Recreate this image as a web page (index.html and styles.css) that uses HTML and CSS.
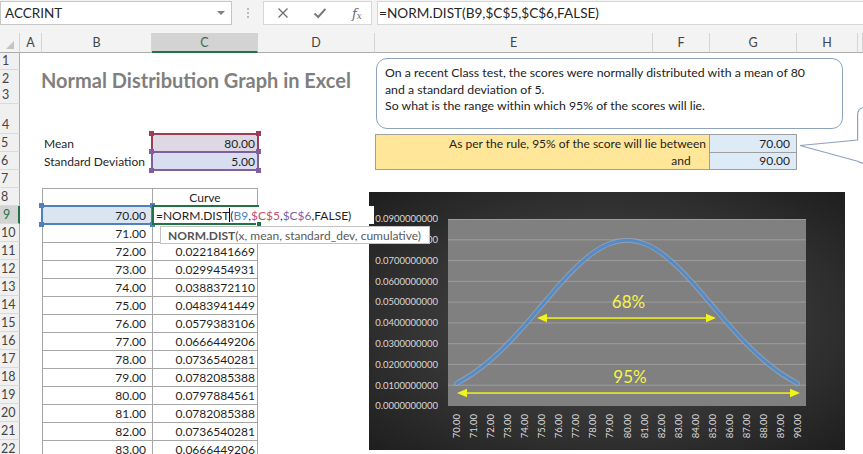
FILE: index.html
```html
<!DOCTYPE html>
<html>
<head>
<meta charset="utf-8">
<title>Normal Distribution Graph in Excel</title>
<link rel="stylesheet" href="styles.css">
</head>
<body>
<div class="fbar">
  <div class="namebox"><span>ACCRINT</span><span class="dd"></span></div>
  <div class="grip"><i></i><i></i><i></i></div>
  <div class="btns">
    <span class="btn"><svg width="12" height="12" viewBox="0 0 12 12"><path d="M1.5 1.5L10.5 10.5M10.5 1.5L1.5 10.5" stroke="#6d6d6d" stroke-width="1.3" fill="none"/></svg></span>
    <span class="btn"><svg width="14" height="12" viewBox="0 0 14 12"><path d="M1.5 6.5L5.2 10L12.5 1.8" fill="none" stroke="#7a7a7a" stroke-width="2"/></svg></span>
    <span class="btn fx"><i>f</i><small>x</small></span>
  </div>
  <div class="finput">=NORM.DIST(B9,$C$5,$C$6,FALSE)</div>
</div>

<div class="sheet">
  <div class="r hdr">
    <div class="hc corner"><span class="tri"></span></div>
    <div class="hc">A</div><div class="hc">B</div><div class="hc sel">C</div><div class="hc">D</div><div class="hc">E</div><div class="hc">F</div><div class="hc">G</div><div class="hc">H</div><div class="hc"></div>
  </div>
  <div class="r s"><div class="rh">1</div><div class="c"></div><div class="c"></div><div class="c"></div><div class="c"></div><div class="c"></div><div class="c"></div><div class="c"></div><div class="c"></div><div class="c"></div></div>
  <div class="r s"><div class="rh">2</div><div class="c"></div><div class="c tcell"><span class="title">Normal Distribution Graph in Excel</span></div><div class="c"></div><div class="c"></div><div class="c"></div><div class="c"></div><div class="c"></div><div class="c"></div><div class="c"></div></div>
  <div class="r s"><div class="rh">3</div><div class="c"></div><div class="c"></div><div class="c"></div><div class="c"></div><div class="c"></div><div class="c"></div><div class="c"></div><div class="c"></div><div class="c"></div></div>
  <div class="r tall"><div class="rh">4</div><div class="c"></div><div class="c"></div><div class="c"></div><div class="c"></div><div class="c"></div><div class="c"></div><div class="c"></div><div class="c"></div><div class="c"></div></div>
  <div class="r"><div class="rh">5</div><div class="c"></div><div class="c lbl">Mean</div><div class="c num c5">80.00</div><div class="c"></div><div class="c yl y5">As per the rule, 95% of the score will lie between</div><div class="c g">70.00</div><div class="c"></div><div class="c"></div></div>
  <div class="r"><div class="rh">6</div><div class="c"></div><div class="c lbl">Standard Deviation</div><div class="c num c6">5.00</div><div class="c"></div><div class="c yl y6e"></div><div class="c yl y6f">and</div><div class="c g g6">90.00</div><div class="c"></div><div class="c"></div></div>
  <div class="r"><div class="rh">7</div><div class="c"></div><div class="c"></div><div class="c"></div><div class="c"></div><div class="c"></div><div class="c"></div><div class="c"></div><div class="c"></div><div class="c"></div></div>
  <div class="r"><div class="rh">8</div><div class="c"></div><div class="c t"></div><div class="c t tr ctr">Curve</div><div class="c"></div><div class="c"></div><div class="c"></div><div class="c"></div><div class="c"></div><div class="c"></div></div>
  <div class="r"><div class="rh sel">9</div><div class="c"></div><div class="c t bn b9">70.00</div><div class="c t tr cn"></div><div class="c"></div><div class="c"></div><div class="c"></div><div class="c"></div><div class="c"></div><div class="c"></div></div>
  <div class="r"><div class="rh">10</div><div class="c"></div><div class="c t bn">71.00</div><div class="c t tr cn"></div><div class="c"></div><div class="c"></div><div class="c"></div><div class="c"></div><div class="c"></div><div class="c"></div></div>
  <div class="r"><div class="rh">11</div><div class="c"></div><div class="c t bn">72.00</div><div class="c t tr cn">0.0221841669</div><div class="c"></div><div class="c"></div><div class="c"></div><div class="c"></div><div class="c"></div><div class="c"></div></div>
  <div class="r"><div class="rh">12</div><div class="c"></div><div class="c t bn">73.00</div><div class="c t tr cn">0.0299454931</div><div class="c"></div><div class="c"></div><div class="c"></div><div class="c"></div><div class="c"></div><div class="c"></div></div>
  <div class="r"><div class="rh">13</div><div class="c"></div><div class="c t bn">74.00</div><div class="c t tr cn">0.0388372110</div><div class="c"></div><div class="c"></div><div class="c"></div><div class="c"></div><div class="c"></div><div class="c"></div></div>
  <div class="r"><div class="rh">14</div><div class="c"></div><div class="c t bn">75.00</div><div class="c t tr cn">0.0483941449</div><div class="c"></div><div class="c"></div><div class="c"></div><div class="c"></div><div class="c"></div><div class="c"></div></div>
  <div class="r"><div class="rh">15</div><div class="c"></div><div class="c t bn">76.00</div><div class="c t tr cn">0.0579383106</div><div class="c"></div><div class="c"></div><div class="c"></div><div class="c"></div><div class="c"></div><div class="c"></div></div>
  <div class="r"><div class="rh">16</div><div class="c"></div><div class="c t bn">77.00</div><div class="c t tr cn">0.0666449206</div><div class="c"></div><div class="c"></div><div class="c"></div><div class="c"></div><div class="c"></div><div class="c"></div></div>
  <div class="r"><div class="rh">17</div><div class="c"></div><div class="c t bn">78.00</div><div class="c t tr cn">0.0736540281</div><div class="c"></div><div class="c"></div><div class="c"></div><div class="c"></div><div class="c"></div><div class="c"></div></div>
  <div class="r"><div class="rh">18</div><div class="c"></div><div class="c t bn">79.00</div><div class="c t tr cn">0.0782085388</div><div class="c"></div><div class="c"></div><div class="c"></div><div class="c"></div><div class="c"></div><div class="c"></div></div>
  <div class="r"><div class="rh">19</div><div class="c"></div><div class="c t bn">80.00</div><div class="c t tr cn">0.0797884561</div><div class="c"></div><div class="c"></div><div class="c"></div><div class="c"></div><div class="c"></div><div class="c"></div></div>
  <div class="r"><div class="rh">20</div><div class="c"></div><div class="c t bn">81.00</div><div class="c t tr cn">0.0782085388</div><div class="c"></div><div class="c"></div><div class="c"></div><div class="c"></div><div class="c"></div><div class="c"></div></div>
  <div class="r"><div class="rh">21</div><div class="c"></div><div class="c t bn">82.00</div><div class="c t tr cn">0.0736540281</div><div class="c"></div><div class="c"></div><div class="c"></div><div class="c"></div><div class="c"></div><div class="c"></div></div>
  <div class="r"><div class="rh">22</div><div class="c"></div><div class="c t bn">83.00</div><div class="c t tr cn">0.0666449206</div><div class="c"></div><div class="c"></div><div class="c"></div><div class="c"></div><div class="c"></div><div class="c"></div></div>
</div>

<div class="rng c5r"><span class="hd tl"></span><span class="hd tr2"></span></div>
<div class="rng c6r"><span class="hd tl"></span><span class="hd tr2"></span><span class="hd bl"></span><span class="hd br"></span></div>

<div class="chart">
  <svg width="476" height="258" viewBox="0 0 476 258">
    <rect x="79" y="27" width="358" height="187" fill="#808080"/>
    <g stroke="#9d9d9d" stroke-width="1">
      <line x1="79" y1="27.5" x2="437" y2="27.5"/>
      <line x1="79" y1="47.8" x2="437" y2="47.8"/>
      <line x1="79" y1="68.6" x2="437" y2="68.6"/>
      <line x1="79" y1="89.3" x2="437" y2="89.3"/>
      <line x1="79" y1="110.1" x2="437" y2="110.1"/>
      <line x1="79" y1="130.9" x2="437" y2="130.9"/>
      <line x1="79" y1="151.7" x2="437" y2="151.7"/>
      <line x1="79" y1="172.4" x2="437" y2="172.4"/>
      <line x1="79" y1="193.2" x2="437" y2="193.2"/>
    </g>
    <g class="ylab" text-anchor="end">
      <text x="69" y="30.3">0.0900000000</text>
      <text x="69" y="51.1">0.0800000000</text>
      <text x="69" y="71.9">0.0700000000</text>
      <text x="69" y="92.6">0.0600000000</text>
      <text x="69" y="113.4">0.0500000000</text>
      <text x="69" y="134.2">0.0400000000</text>
      <text x="69" y="155">0.0300000000</text>
      <text x="69" y="175.7">0.0200000000</text>
      <text x="69" y="196.5">0.0100000000</text>
      <text x="69" y="217.3">0.0000000000</text>
    </g>
    <g class="xlab" text-anchor="end" dominant-baseline="central">
      <text transform="translate(87.5 222) rotate(-90)">70.00</text>
      <text transform="translate(104.55 222) rotate(-90)">71.00</text>
      <text transform="translate(121.6 222) rotate(-90)">72.00</text>
      <text transform="translate(138.65 222) rotate(-90)">73.00</text>
      <text transform="translate(155.7 222) rotate(-90)">74.00</text>
      <text transform="translate(172.75 222) rotate(-90)">75.00</text>
      <text transform="translate(189.8 222) rotate(-90)">76.00</text>
      <text transform="translate(206.85 222) rotate(-90)">77.00</text>
      <text transform="translate(223.9 222) rotate(-90)">78.00</text>
      <text transform="translate(240.95 222) rotate(-90)">79.00</text>
      <text transform="translate(258 222) rotate(-90)">80.00</text>
      <text transform="translate(275.05 222) rotate(-90)">81.00</text>
      <text transform="translate(292.1 222) rotate(-90)">82.00</text>
      <text transform="translate(309.15 222) rotate(-90)">83.00</text>
      <text transform="translate(326.2 222) rotate(-90)">84.00</text>
      <text transform="translate(343.25 222) rotate(-90)">85.00</text>
      <text transform="translate(360.3 222) rotate(-90)">86.00</text>
      <text transform="translate(377.35 222) rotate(-90)">87.00</text>
      <text transform="translate(394.4 222) rotate(-90)">88.00</text>
      <text transform="translate(411.45 222) rotate(-90)">89.00</text>
      <text transform="translate(428.5 222) rotate(-90)">90.00</text>
    </g>
    <path d="M87.5,191.56 C90.34,189.82 98.87,185.05 104.55,181.11 C110.23,177.17 115.92,172.80 121.6,167.91 C127.28,163.02 132.97,157.55 138.65,151.78 C144.33,146.01 150.02,139.70 155.7,133.31 C161.38,126.92 167.07,120.07 172.75,113.45 C178.43,106.84 184.12,99.94 189.8,93.62 C195.48,87.30 201.17,80.97 206.85,75.53 C212.53,70.09 218.22,64.98 223.9,60.97 C229.58,56.97 235.27,53.63 240.95,51.50 C246.63,49.38 252.32,48.22 258,48.22 C263.68,48.22 269.37,49.38 275.05,51.50 C280.73,53.63 286.42,56.97 292.1,60.97 C297.78,64.98 303.47,70.09 309.15,75.53 C314.83,80.97 320.52,87.30 326.2,93.62 C331.88,99.94 337.57,106.84 343.25,113.45 C348.93,120.07 354.62,126.92 360.3,133.31 C365.98,139.70 371.67,146.01 377.35,151.78 C383.03,157.55 388.72,163.02 394.4,167.91 C400.08,172.80 405.77,177.17 411.45,181.11 C417.13,185.05 425.66,189.82 428.5,191.56" fill="none" stroke="#a4c0e0" stroke-width="5" stroke-linecap="round" opacity="0.5"/>
    <path d="M87.5,191.56 C90.34,189.82 98.87,185.05 104.55,181.11 C110.23,177.17 115.92,172.80 121.6,167.91 C127.28,163.02 132.97,157.55 138.65,151.78 C144.33,146.01 150.02,139.70 155.7,133.31 C161.38,126.92 167.07,120.07 172.75,113.45 C178.43,106.84 184.12,99.94 189.8,93.62 C195.48,87.30 201.17,80.97 206.85,75.53 C212.53,70.09 218.22,64.98 223.9,60.97 C229.58,56.97 235.27,53.63 240.95,51.50 C246.63,49.38 252.32,48.22 258,48.22 C263.68,48.22 269.37,49.38 275.05,51.50 C280.73,53.63 286.42,56.97 292.1,60.97 C297.78,64.98 303.47,70.09 309.15,75.53 C314.83,80.97 320.52,87.30 326.2,93.62 C331.88,99.94 337.57,106.84 343.25,113.45 C348.93,120.07 354.62,126.92 360.3,133.31 C365.98,139.70 371.67,146.01 377.35,151.78 C383.03,157.55 388.72,163.02 394.4,167.91 C400.08,172.80 405.77,177.17 411.45,181.11 C417.13,185.05 425.66,189.82 428.5,191.56" fill="none" stroke="#558bc6" stroke-width="3" stroke-linecap="round"/>
    <g fill="#f3f31c" stroke="none">
      <rect x="96" y="200.3" width="327" height="1.5"/>
      <polygon points="88,201 98,196.8 98,205.2"/>
      <polygon points="431,201 421,196.8 421,205.2"/>
      <rect x="176" y="125.3" width="163" height="1.5"/>
      <polygon points="168,126 178,121.8 178,130.2"/>
      <polygon points="347,126 337,121.8 337,130.2"/>
    </g>
    <g class="pct" text-anchor="middle">
      <text x="259.5" y="116">68%</text>
      <text x="261" y="191">95%</text>
    </g>
  </svg>
</div>

<div class="note">On a recent Class test, the scores were normally distributed with a mean of 80<br>and a standard deviation of 5.<br>So what is the range within which 95% of the scores will lie.</div>

<svg class="call" width="65" height="62" viewBox="0 0 65 62">
  <path d="M80,3.6 H67 Q59.6,3.6 59.6,11 V36 L2,41.5 L60.5,57.5 Q62.5,59.3 67,59.3 H80" fill="#fff" stroke="#8da2bd" stroke-width="1.2"/>
</svg>

<div class="rng b9r"><span class="hd tl"></span><span class="hd tr2"></span><span class="hd bl"></span><span class="hd br"></span></div>

<div class="editor">=NORM.DIST<span class="caret"></span>(<span class="rb">B9</span>,<span class="rr">$C$5</span>,<span class="rp">$C$6</span>,FALSE)</div>
<div class="active"><span class="fill"></span></div>

<div class="tip"><b>NORM.DIST</b>(x, mean, standard_dev, cumulative)</div>
</body>
</html>
```

FILE: styles.css
```css
* { box-sizing: border-box; margin: 0; padding: 0; }
html, body { width: 863px; height: 454px; overflow: hidden; background: #fff; }
body { position: relative; font-family: Lato, "Liberation Sans", sans-serif; font-size: 12px; color: #1f1f1f; }

/* formula bar */
.fbar { display: flex; align-items: flex-start; height: 33px; padding-top: 1px; background: #f3f3f3; }
.namebox { display: flex; align-items: center; justify-content: space-between; width: 232px; height: 24px; padding: 0 6px 0 4px; background: #fff; border: 1px solid #c6c6c6; font-size: 13.5px; color: #262626; }
.dd { width: 0; height: 0; border-left: 4px solid transparent; border-right: 4px solid transparent; border-top: 4px solid #808080; }
.grip { display: flex; flex-direction: column; align-items: center; justify-content: center; gap: 2px; width: 31px; height: 24px; }
.grip i { display: block; width: 2px; height: 2px; background: #b9b9b9; }
.btns { display: flex; align-items: center; gap: 17px; width: 109px; height: 24px; padding-left: 9px; background: #fff; border: 1px solid #d6d6d6; }
.btn { display: flex; align-items: center; justify-content: center; width: 20px; height: 20px; }
.fx { font-family: "DejaVu Serif", "Liberation Serif", serif; font-size: 13px; color: #6a6a6a; }
.fx i { font-style: italic; }
.fx small { font-size: 9px; font-style: italic; margin-top: 5px; }
.finput { flex: 1; height: 24px; margin-left: 5px; padding-left: 1px; display: flex; align-items: center; background: #fff; border: 1px solid #d6d6d6; border-right: 0; font-size: 13.6px; color: #262626; white-space: nowrap; }

/* sheet grid */
.sheet { display: flex; flex-direction: column; }
.r { display: grid; grid-template-columns: 20px 22px 110px 106px 117px 278px 57px 87px 61px 1fr; height: 18px; }
.r.s { height: 17px; }
.r.tall { height: 30px; }
.r.hdr { height: 20px; }
.c { display: flex; align-items: flex-end; padding: 0 3px 1px; white-space: nowrap; min-width: 0; }
.hc { display: flex; align-items: center; justify-content: center; background: #f3f3f3; border-right: 1px solid #d5d5d5; border-bottom: 1px solid #ababab; color: #444; font-size: 12.5px; }
.hc.sel { background: #d3d3d3; border-bottom: 2px solid #217346; color: #3c6a4c; }
.corner { justify-content: flex-end; align-items: flex-end; padding: 0 5px 3px 0; }
.tri { width: 0; height: 0; border-left: 8px solid transparent; border-bottom: 8px solid #c4c4c4; }
.rh { display: flex; align-items: flex-end; justify-content: flex-start; padding: 0 0 1px 1px; background: #f0f0f0; border-right: 1px solid #ababab; border-bottom: 1px solid #dadada; color: #444; font-size: 12.5px; white-space: nowrap; }
.r.s .rh, .r.tall .rh { padding-left: 2px; }
.rh.sel { background: #d3d3d3; border-right: 2px solid #217346; color: #217346; padding-left: 3px; }

.tcell { padding-left: 0; }
.title { font-size: 20px; font-weight: 700; color: #7f7f7f; line-height: 20px; margin-bottom: -3px; margin-left: -1px; }
.lbl { padding-left: 2px; }
.num { justify-content: flex-end; }
.c5 { background: #ddd8e3; }
.c6 { background: #d8ddf0; }

.yl { background: #ffe699; }
.y5 { grid-column: span 2; justify-content: flex-end; padding-right: 3px; border: 1px solid #9f9f9f; border-bottom: 0; }
.y6e { border-left: 1px solid #9f9f9f; border-bottom: 1px solid #9f9f9f; }
.y6f { justify-content: center; border-right: 1px solid #9f9f9f; border-bottom: 1px solid #9f9f9f; }
.g { background: #ddebf7; justify-content: flex-end; padding-right: 6px; border-right: 1px solid #9f9f9f; border-top: 1px solid #9f9f9f; }
.g6 { border-bottom: 1px solid #9f9f9f; }

.t { border-left: 1px solid #a6a6a6; border-top: 1px solid #a6a6a6; }
.tr { border-right: 1px solid #a6a6a6; }
.ctr { justify-content: center; }
.bn { justify-content: flex-end; padding-right: 6px; }
.cn { justify-content: flex-end; padding-right: 2px; }
.b9 { background: #dbe5f1; }

/* range reference highlights */
.rng { position: absolute; border: 2px solid currentColor; }
.hd { position: absolute; width: 5px; height: 5px; background: currentColor; }
.hd.tl { left: -4px; top: -4px; }
.hd.tr2 { right: -4px; top: -4px; }
.hd.bl { left: -4px; bottom: -4px; }
.hd.br { right: -4px; bottom: -4px; }
.c5r { left: 151px; top: 133px; width: 108px; height: 20px; color: #9b3e55; }
.c6r { left: 151px; top: 151px; width: 108px; height: 20px; color: #7f5f9f; }
.b9r { left: 41px; top: 205px; width: 112px; height: 20px; color: #4f7fbf; }

/* chart */
.chart { position: absolute; left: 369px; top: 192px; width: 476px; height: 258px; background: radial-gradient(ellipse at 50% 50%, #4d4d4d 0%, #353535 55%, #1e1e1e 100%); }
.chart svg { display: block; }
.ylab text { font-family: Lato, "Liberation Sans", sans-serif; font-size: 9.5px; fill: #d9d9d9; }
.xlab text { font-family: Lato, "Liberation Sans", sans-serif; font-size: 9.5px; fill: #d9d9d9; }
.pct text { font-family: Lato, "Liberation Sans", sans-serif; font-size: 17px; fill: #f5f54a; }

/* text box */
.note { position: absolute; left: 376px; top: 58px; width: 467px; height: 71px; padding: 6px 8px; background: #fff; border: 1.3px solid #8da2bd; border-radius: 11px; line-height: 16.5px; font-size: 12.3px; color: #222; white-space: nowrap; }
.call { position: absolute; left: 798px; top: 104px; }

/* in-cell editor */
.editor { position: absolute; left: 152px; top: 206px; width: 222px; height: 18px; padding-left: 4px; display: flex; align-items: center; background: #fff; white-space: nowrap; color: #1f1f1f; }
.caret { display: inline-block; width: 0; height: 14px; border-left: 1px solid #000; }
.rb { color: #4f7fc4; }
.rr { color: #c4506a; }
.rp { color: #8064a2; }
.active { position: absolute; left: 152px; top: 205px; width: 107px; height: 20px; border: 2px solid #217346; border-right: 0; }
.fill { position: absolute; right: -3px; bottom: -4px; width: 6px; height: 6px; background: #217346; border: 1px solid #fff; }

.tip { position: absolute; left: 160px; top: 226px; width: 270px; height: 18px; display: flex; align-items: center; padding-left: 7px; background: #fff; border: 1px solid #c3c3c3; font-size: 12px; color: #5a5a5a; white-space: nowrap; }
.tip b { font-weight: 700; color: #555; }
```
